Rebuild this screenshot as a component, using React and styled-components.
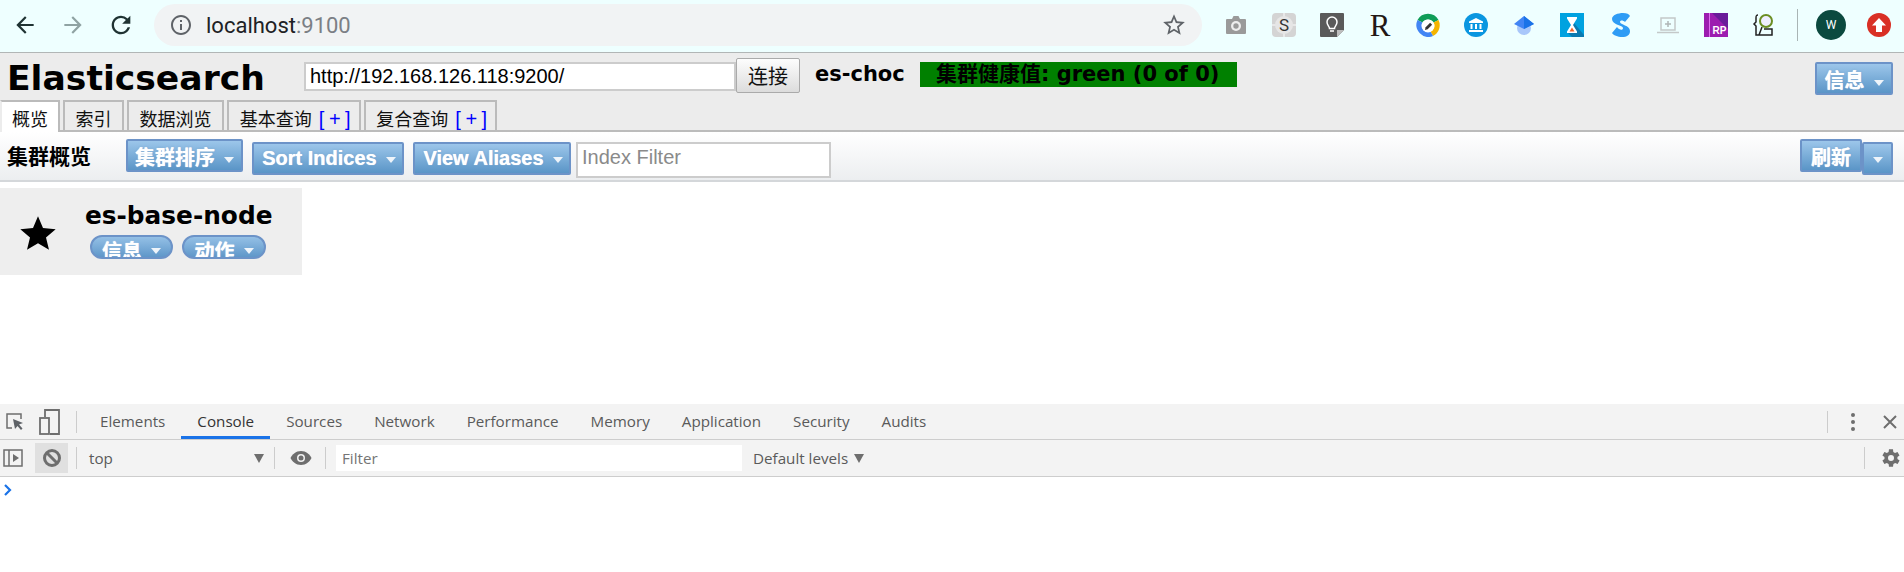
import React from 'react'
import styled, { createGlobalStyle } from 'styled-components'

const GlobalStyle = createGlobalStyle`
  html, body { margin: 0; padding: 0; height: 572px; overflow: hidden; background: #fff; }
  #root { height: 572px; }
  * { box-sizing: border-box; }
`

const cjk = `"Noto Sans CJK SC", sans-serif`
const sans = `"Liberation Sans", "Noto Sans CJK SC", sans-serif`
const bold = `"DejaVu Sans", "Noto Sans CJK SC", sans-serif`
const ui = `"Open Sans", "Noto Sans", sans-serif`

const Page = styled.div`
  height: 572px;
  display: flex;
  flex-direction: column;
`

/* browser chrome */
const Chrome = styled.div`
  height: 53px;
  flex: none;
  display: flex;
  align-items: center;
  padding: 0 1px 2px;
  background: #eeffff;
  border-bottom: 1px solid #b1b6b6;
`
const Slot = styled.div`
  width: 48px;
  height: 24px;
  flex: none;
  display: flex;
  align-items: center;
  justify-content: center;
  color: ${p => p.$color || '#1f3333'};
`
const Omnibox = styled.div`
  width: 1048px;
  height: 42px;
  margin: 0 10px 0 9px;
  flex: none;
  display: flex;
  align-items: center;
  padding: 0 15px 0 15px;
  border-radius: 21px;
  background: #f1f3f4;
`
const Host = styled.div`
  flex: 1;
  margin-left: 13px;
  font: 22px Roboto, sans-serif;
  color: #202124;
  span { color: #7b7f85; }
`
const ChromeDivider = styled.div`
  width: 1px;
  height: 32px;
  margin: 0 9px;
  flex: none;
  background: #a9b5b5;
`
const Avatar = styled.div`
  width: 30px;
  height: 30px;
  border-radius: 50%;
  background: #0b4a3f;
  color: #fff;
  font: 12px Roboto, sans-serif;
  display: flex;
  align-items: center;
  justify-content: center;
`

/* elasticsearch head */
const Header = styled.div`
  height: 79px;
  flex: none;
  background: #ececec;
  border-bottom: 2px solid #bbb;
  display: flex;
  flex-direction: column;
`
const TopRow = styled.div`
  height: 47px;
  flex: none;
  display: flex;
  align-items: flex-start;
  padding-left: 7px;
  padding-right: 11px;
`
const Title = styled.h1`
  width: 297px;
  margin: 5px 0 0;
  flex: none;
  font: bold 34.6px/40px ${bold};
  color: #000;
  white-space: nowrap;
`
const TextInput = styled.input`
  width: ${p => p.$width}px;
  height: ${p => p.$height}px;
  margin-top: ${p => p.$top}px;
  margin-left: ${p => p.$left || 0}px;
  flex: none;
  padding: 0 4px ${p => p.$lift || 0}px;
  border: 2px solid #ccc;
  background: #fff;
  color: #000;
  font: 20px ${sans};
  outline: none;
  &::placeholder { color: #8a8a8a; opacity: 1; }
`
const Connect = styled.button`
  width: 64px;
  height: 35px;
  margin-top: 5px;
  flex: none;
  padding: 0;
  border: 1px solid #aaa;
  border-radius: 2px;
  background: linear-gradient(#fdfdfd, #dcdcdc);
  color: #111;
  font: 20px/32px ${cjk};
`
const ClusterName = styled.span`
  width: 105px;
  margin: 7px 0 0 15px;
  flex: none;
  font: bold 21px/28px ${bold};
  color: #000;
`
const Health = styled.div`
  width: 317px;
  height: 25px;
  margin-top: 9px;
  flex: none;
  padding-left: 16px;
  background: #008000;
  color: #000;
  font: bold 21px/25px ${bold};
  white-space: nowrap;
  overflow: hidden;
`
const Tabs = styled.div`
  height: 30px;
  display: flex;
  align-items: flex-end;
  gap: 3px;
`
const Tab = styled.div`
  height: ${p => (p.$active ? 32 : 30)}px;
  width: ${p => p.$w}px;
  flex: none;
  margin-bottom: ${p => (p.$active ? -2 : 0)}px;
  padding-left: ${p => p.$inset || 0}px;
  border: 2px solid #bbb;
  border-bottom: none;
  border-left-color: ${p => (p.$active ? '#ececec' : '#bbb')};
  background: ${p => (p.$active ? '#fff' : '#ececec')};
  color: #111;
  font: 18px/33px ${cjk};
  text-align: center;
  white-space: nowrap;
  overflow: hidden;
  span { color: #00f; margin-left: 7px; font: 20px ${sans}; letter-spacing: 4.5px; }
`

const Caret = styled.i`
  display: inline-block;
  width: 0;
  height: 0;
  margin-left: ${p => p.$gap ?? 9}px;
  vertical-align: ${p => p.$lift ?? 2}px;
  border-left: 5.5px solid transparent;
  border-right: 5.5px solid transparent;
  border-top: 6px solid #eef4fa;
`
const Btn = styled.button`
  width: ${p => p.$w}px;
  height: 33px;
  margin-top: ${p => p.$top}px;
  margin-left: ${p => p.$left || 0}px;
  flex: none;
  padding: ${p => p.$down || 0}px 0 0 ${p => p.$inset || 0}px;
  border: 2px solid #6c93c8;
  border-radius: 2px;
  background: linear-gradient(#9cc6ea, #5a95c7);
  color: #fff;
  font: bold 20px/27px ${sans};
  text-shadow: 0 0 1px #fff, 0 0 2px #5a8fc0;
  white-space: nowrap;
`
const Toolbar = styled.div`
  height: 50px;
  flex: none;
  display: flex;
  align-items: flex-start;
  padding: 0 11px 0 7px;
  background: linear-gradient(#fff, #eceef0);
  border-bottom: 2px solid #d4d7da;
`
const ToolbarTitle = styled.div`
  width: 119px;
  margin-top: 9px;
  flex: none;
  font: bold 21px/28px ${cjk};
  color: #000;
`
const Spacer = styled.div`
  flex: 1;
`
const Main = styled.div`
  flex: 1;
  padding-top: 6px;
  background: #fff;
`
const NodeCard = styled.div`
  width: 302px;
  height: 87px;
  display: flex;
  background: #eee;
`
const StarCell = styled.div`
  width: 85px;
  flex: none;
  display: flex;
  align-items: center;
  justify-content: center;
  padding: 2px 9px 0 0;
`
const NodeBody = styled.div`
  display: flex;
  flex-direction: column;
`
const NodeName = styled.div`
  height: 47px;
  padding-top: 7px;
  font: bold 24.8px/42px ${bold};
  color: #000;
  white-space: nowrap;
`
const Pills = styled.div`
  display: flex;
  gap: 9px;
  margin-left: 5px;
`
const Pill = styled.div`
  width: ${p => p.$w}px;
  height: 24px;
  overflow: hidden;
  border: 2px solid #6c93c8;
  border-radius: 12px;
  background: linear-gradient(#94c0e6, #5f97c9);
  color: #fff;
  font: bold 20px/27px ${cjk};
  text-align: center;
  text-shadow: 0 0 1px #fff;
  white-space: nowrap;
`

/* devtools */
const DevTools = styled.div`
  height: 168px;
  flex: none;
  background: #fff;
  color: #5a5a5a;
  font: 15.2px ${ui};
`
const DevRow = styled.div`
  height: ${p => p.$h}px;
  display: flex;
  align-items: center;
  background: #f3f3f3;
  border-bottom: 1px solid #cdcdcd;
`
const DevIcon = styled.div`
  width: ${p => p.$w}px;
  height: ${p => p.$h || 24}px;
  flex: none;
  margin-left: ${p => p.$left || 0}px;
  margin-right: ${p => p.$right || 0}px;
  display: flex;
  align-items: center;
  justify-content: center;
  background: ${p => (p.$on ? '#e0e0e0' : 'transparent')};
  color: #6e6e6e;
`
const DevDivider = styled.div`
  width: 1px;
  height: 22px;
  flex: none;
  margin: ${p => p.$margin};
  background: #ccc;
`
const DevTabList = styled.div`
  height: 100%;
  margin-left: 7px;
  display: flex;
`
const DevTab = styled.div`
  height: 100%;
  flex: none;
  padding: 0 16px;
  line-height: 35px;
  color: ${p => (p.$active ? '#333' : '#5a5a5a')};
  border-bottom: 3px solid ${p => (p.$active ? '#1a73e8' : 'transparent')};
`
const ContextSelect = styled.div`
  width: 185px;
  flex: none;
  display: flex;
  align-items: center;
  justify-content: space-between;
  padding-right: 10px;
  margin-left: 12px;
`
const DownTri = styled.i`
  width: 0;
  height: 0;
  border-left: 5px solid transparent;
  border-right: 5px solid transparent;
  border-top: 9px solid #6e6e6e;
`
const FilterBox = styled.div`
  width: 406px;
  height: 26px;
  flex: none;
  padding-left: 6px;
  line-height: 27px;
  background: #fff;
  color: #757575;
`
const Levels = styled.div`
  margin-left: 11px;
  flex: none;
  display: flex;
  align-items: center;
  gap: 6px;
`
const Prompt = styled.div`
  padding: 6px 0 0 3px;
  color: #1a73e8;
  display: flex;
`

const MI = ({ d, size = 24, color = 'currentColor' }) => (
  <svg width={size} height={size} viewBox="0 0 24 24" fill={color}><path d={d} /></svg>
)

const arrowBack = 'M20 11H7.83l5.59-5.59L12 4l-8 8 8 8 1.41-1.41L7.83 13H20v-2z'
const arrowForward = 'M12 4l-1.41 1.41L16.17 11H4v2h12.17l-5.58 5.59L12 20l8-8z'
const refresh = 'M17.65 6.35A7.958 7.958 0 0 0 12 4c-4.42 0-7.99 3.58-7.99 8s3.57 8 7.99 8c3.73 0 6.84-2.55 7.73-6h-2.08A5.99 5.99 0 0 1 12 18c-3.31 0-6-2.69-6-6s2.69-6 6-6c1.66 0 3.14.69 4.22 1.78L13 11h7V4l-2.35 2.35z'
const info = 'M11 7h2v2h-2zm0 4h2v6h-2zm1-9C6.48 2 2 6.48 2 12s4.48 10 10 10 10-4.48 10-10S17.52 2 12 2zm0 18c-4.41 0-8-3.59-8-8s3.59-8 8-8 8 3.59 8 8-3.59 8-8 8z'
const starBorder = 'M22 9.24l-7.19-.62L12 2 9.19 8.63 2 9.24l5.46 4.73L5.82 21 12 17.27 18.18 21l-1.63-7.03L22 9.24zM12 15.4l-3.76 2.27 1-4.28-3.32-2.88 4.38-.38L12 6.1l1.71 4.04 4.38.38-3.32 2.88 1 4.28L12 15.4z'
const star = 'M12 2l3 7 7.6.7-5.8 5 1.8 7.4L12 18.2 5.400 22.100l1.800-7.400-5.800-5L9 9z'
const gear = 'M19.4 13a7.5 7.5 0 0 0 0-2l2.100-1.600-2-3.500-2.500 1a7.500 7.500 0 0 0-1.700-1L15 3.200h-4l-.4 2.700a7.500 7.500 0 0 0-1.700 1l-2.500-1-2 3.500L6.500 11a7.500 7.500 0 0 0 0 2l-2.100 1.600 2 3.500 2.500-1a7.500 7.500 0 0 0 1.700 1l.4 2.700h4l.4-2.700a7.500 7.500 0 0 0 1.700-1l2.500 1 2-3.500zM13 15a3 3 0 1 1 0-6 3 3 0 0 1 0 6z'

const Ext = ({ children }) => (
  <Slot><svg width="24" height="24" viewBox="0 0 24 24">{children}</svg></Slot>
)

const ExtensionIcons = () => (
  <>
    <Ext>
      <path d="M3 6h5l1.500-3h5L16 6h5a1 1 0 0 1 1 1v13a1 1 0 0 1-1 1H3a1 1 0 0 1-1-1V7a1 1 0 0 1 1-1z" fill="#9a9a9a" />
      <circle cx="12" cy="13" r="5" fill="#eee" /><circle cx="12" cy="13" r="2.700" fill="#9a9a9a" />
    </Ext>
    <Ext>
      <rect width="24" height="24" rx="4" fill="#d4d4d4" />
      <path d="M0 12h24M12 0v24" stroke="#eee" strokeWidth="1.500" />
      <circle cx="12" cy="12" r="9" fill="#e6e6e6" />
      <text x="12" y="18" textAnchor="middle" fontFamily="Roboto" fontSize="17" fill="#333">S</text>
    </Ext>
    <Ext>
      <path d="M1 0h22a1 1 0 0 1 1 1v16l-7 7H1a1 1 0 0 1-1-1V1a1 1 0 0 1 1-1z" fill="#5a5a5a" />
      <path d="M17 24v-7h7z" fill="#bdbdbd" />
      <path d="M9.500 15.500c0-2-2.500-3-2.500-6.500a5 5 0 0 1 10 0c0 3.500-2.500 4.500-2.500 6.500zM10 18h4" fill="none" stroke="#fff" strokeWidth="1.500" />
    </Ext>
    <Slot>
      <svg width="24" height="26" viewBox="0 0 24 26">
        <text x="12" y="24" textAnchor="middle" fontFamily="Liberation Serif" fontSize="31" fill="#231815">R</text>
      </svg>
    </Slot>
    <Ext>
      <path d="M1.500 7a12 12 0 0 1 21 0l-5 2.500a6.500 6.500 0 0 0-11 0z" fill="#0f9d58" />
      <path d="M22.500 7A12 12 0 0 1 17 23l-2.500-4.500a6.500 6.500 0 0 0 3-9z" fill="#f4b400" />
      <path d="M1.500 7A12 12 0 0 0 17 23l-2.500-4.500a6.500 6.500 0 0 1-8-9z" fill="#4285f4" />
      <circle cx="12" cy="13" r="6.500" fill="#fff" />
      <path d="M9 17l.6-2.700 4.500-4.500 2 2-4.500 4.500z" fill="#333" />
    </Ext>
    <Ext>
      <circle cx="12" cy="12" r="12" fill="#0a96e0" />
      <path d="M12 5l7 3.500v1.500H5V8.500zM6.500 11h2v5h-2zM11 11h2v5h-2zM15.500 11h2v5h-2zM5 17h14v2H5z" fill="#fff" />
    </Ext>
    <Ext>
      <circle cx="12" cy="15" r="7" fill="#a8c7fa" />
      <path d="M12 3l10 8-10 5-10-5z" fill="#4285f4" />
      <path d="M12 3l10 8-10 5z" fill="#1a73e8" />
    </Ext>
    <Ext>
      <rect width="24" height="24" fill="#00a2e0" />
      <path d="M14 10l10 12v2H12L8 20z" fill="#0a7ab0" />
      <path d="M7 4h10v1.500l-4 6.500 4 6.500V20H7v-1.500l4-6.500-4-6.500z" fill="#fff" />
      <path d="M9.500 18.500h5L12 14.500z" fill="#f0632a" />
    </Ext>
    <Ext>
      <path d="M15 0c4 0 6 1 7 3l-5 6c-2-2-5-2-5 0 0 3 10 3 10 9 0 4-3 6-8 6-4 0-9-2-10-4l5-6c2 3 6 4 6 1 0-3-11-3-11-9C4 2 10 0 15 0z" fill="#2f9cf5" />
    </Ext>
    <Ext>
      <path d="M5 5h14v12H5zM1 19.500h22" fill="none" stroke="#c4c9c9" strokeWidth="1.500" />
      <path d="M12 8v6M9 11h6" stroke="#b0b6b6" strokeWidth="1.500" />
    </Ext>
    <Ext>
      <rect width="24" height="24" fill="#9c1db0" />
      <path d="M5 0h1v24H5z" fill="#e06ff0" />
      <path d="M8 0h16v16z" fill="#6a1b9a" />
      <text x="15.500" y="21" textAnchor="middle" fontFamily="Liberation Sans" fontWeight="bold" fontSize="10" fill="#fff">RP</text>
    </Ext>
    <Ext>
      <circle cx="14" cy="8" r="6" fill="#eef" stroke="#6b8e23" strokeWidth="2" />
      <path d="M10 14l-3 8M6 2c-2 0-2 1-2 3v4l-2 2 2 2v9h16v-6h-8" fill="none" stroke="#222" strokeWidth="1.500" />
    </Ext>
  </>
)

const DevtoolsTabs = ['Elements', 'Console', 'Sources', 'Network', 'Performance', 'Memory', 'Application', 'Security', 'Audits']

export default function App() {
  return (
    <Page>
      <GlobalStyle />
      <Chrome>
        <Slot><MI d={arrowBack} size={26} /></Slot>
        <Slot $color="#8fa3a3"><MI d={arrowForward} size={26} /></Slot>
        <Slot><MI d={refresh} size={28} /></Slot>
        <Omnibox>
          <MI d={info} size={24} color="#5f6368" />
          <Host>localhost<span>:9100</span></Host>
          <MI d={starBorder} size={26} color="#5f6368" />
        </Omnibox>
        <ExtensionIcons />
        <ChromeDivider />
        <Slot><Avatar>W</Avatar></Slot>
        <Ext>
          <circle cx="12" cy="12" r="12" fill="#d93025" />
          <path d="M12 5l7 7.500h-4V19H9v-6.500H5z" fill="#fff" />
        </Ext>
      </Chrome>

      <Header>
        <TopRow>
          <Title>Elasticsearch</Title>
          <TextInput $width={432} $height={29} $top={9} defaultValue="http://192.168.126.118:9200/" />
          <Connect>连接</Connect>
          <ClusterName>es-choc</ClusterName>
          <Health>集群健康值: green (0 of 0)</Health>
          <Spacer />
          <Btn $w={78} $top={9} $down={4}>信息<Caret /></Btn>
        </TopRow>
        <Tabs>
          <Tab $active $w={60}>概览</Tab>
          <Tab $w={61}>索引</Tab>
          <Tab $w={97}>数据浏览</Tab>
          <Tab $w={134} $inset={7}>基本查询<span>[+]</span></Tab>
          <Tab $w={133} $inset={7}>复合查询<span>[+]</span></Tab>
        </Tabs>
      </Header>

      <Toolbar>
        <ToolbarTitle>集群概览</ToolbarTitle>
        <Btn $w={117} $top={7} $down={4}>集群排序<Caret /></Btn>
        <Btn $w={152} $top={10} $left={9} $inset={2}>Sort Indices<Caret /></Btn>
        <Btn $w={158} $top={10} $left={9} $inset={2}>View Aliases<Caret /></Btn>
        <TextInput $width={255} $height={36} $top={10} $left={5} $lift={6} placeholder="Index Filter" />
        <Spacer />
        <Btn $w={62} $top={7} $down={4}>刷新</Btn>
        <Btn $w={31} $top={10}><Caret $gap={0} /></Btn>
      </Toolbar>

      <Main>
        <NodeCard>
          <StarCell><MI d={star} size={40} color="#000" /></StarCell>
          <NodeBody>
            <NodeName>es-base-node</NodeName>
            <Pills>
              <Pill $w={83}>信息<Caret $lift={5} /></Pill>
              <Pill $w={84}>动作<Caret $lift={5} /></Pill>
            </Pills>
          </NodeBody>
        </NodeCard>
      </Main>

      <DevTools>
        <DevRow $h={36}>
          <DevIcon $w={24} $left={3}>
            <svg width="22" height="22" viewBox="0 0 22 22" fill="none">
              <path d="M8 17H3V3h14v5" stroke="#6e6e6e" strokeWidth="1.500" />
              <path d="M9 8l10 4-4 1.500 3.500 4-1.500 1.500-3.500-4L11 18z" fill="#5f6368" />
            </svg>
          </DevIcon>
          <DevIcon $w={24} $left={11}>
            <svg width="24" height="28" viewBox="0 0 24 28" fill="none" stroke="#6e6e6e" strokeWidth="1.800">
              <path d="M7 9V2h14v24H12" />
              <rect x="2" y="10" width="9" height="16" />
            </svg>
          </DevIcon>
          <DevDivider $margin="0 0 0 14px" />
          <DevTabList>
            {DevtoolsTabs.map(t => <DevTab key={t} $active={t === 'Console'}>{t}</DevTab>)}
          </DevTabList>
          <Spacer />
          <DevDivider $margin="0 17px 0 0" />
          <DevIcon $w={16}>
            <svg width="6" height="20" viewBox="0 0 6 20" fill="#6e6e6e"><circle cx="3" cy="3" r="2" /><circle cx="3" cy="10" r="2" /><circle cx="3" cy="17" r="2" /></svg>
          </DevIcon>
          <DevIcon $w={16} $left={21} $right={6}>
            <svg width="16" height="16" viewBox="0 0 16 16" stroke="#6e6e6e" strokeWidth="2"><path d="M2 2l12 12M14 2L2 14" /></svg>
          </DevIcon>
        </DevRow>
        <DevRow $h={37}>
          <DevIcon $w={22} $left={2}>
            <svg width="20" height="20" viewBox="0 0 20 20" fill="none">
              <rect x="1" y="2" width="18" height="16" stroke="#6e6e6e" strokeWidth="1.500" />
              <path d="M6 2v16" stroke="#6e6e6e" strokeWidth="1.500" />
              <path d="M10 6l6 4-6 4z" fill="#6e6e6e" />
            </svg>
          </DevIcon>
          <DevIcon $w={33} $h={30} $left={11} $on>
            <svg width="20" height="20" viewBox="0 0 20 20" fill="none" stroke="#6e6e6e" strokeWidth="3">
              <circle cx="10" cy="10" r="7.500" /><path d="M5 5l10 10" />
            </svg>
          </DevIcon>
          <DevDivider $margin="0 0 0 8px" />
          <ContextSelect>top<DownTri /></ContextSelect>
          <DevDivider $margin="0" />
          <DevIcon $w={22} $left={15}>
            <svg width="22" height="16" viewBox="0 0 22 16">
              <path d="M11 1c5 0 9 3.500 10.500 7C20 11.500 16 15 11 15S2 11.500.5 8C2 4.500 6 1 11 1z" fill="#6e6e6e" />
              <circle cx="11" cy="8" r="4" fill="#f3f3f3" /><circle cx="11" cy="8" r="2.500" fill="#6e6e6e" />
            </svg>
          </DevIcon>
          <DevDivider $margin="0 10px 0 13px" />
          <FilterBox>Filter</FilterBox>
          <Levels>Default levels<DownTri /></Levels>
          <Spacer />
          <DevDivider $margin="0 13px 0 0" />
          <DevIcon $w={24} $right={2}><MI d={gear} size={24} color="#6e6e6e" /></DevIcon>
        </DevRow>
        <Prompt>
          <svg width="10" height="14" viewBox="0 0 10 14" fill="none" stroke="#1a73e8" strokeWidth="2.200"><path d="M2 2l5 5-5 5" /></svg>
        </Prompt>
      </DevTools>
    </Page>
  )
}
